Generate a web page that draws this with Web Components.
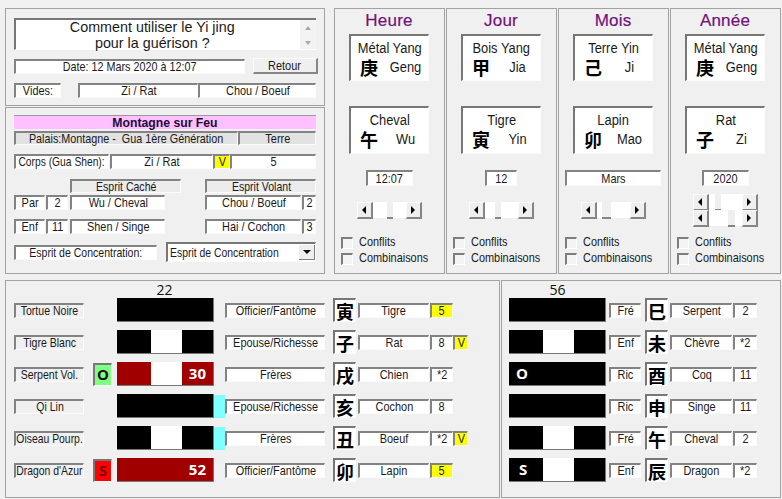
<!DOCTYPE html>
<html lang="fr"><head><meta charset="utf-8"><title>Yi jing</title>
<style>
html,body{margin:0;padding:0;background:#f0f0f0;overflow:hidden}
body{font:13px "Liberation Sans",Arial,sans-serif;color:#111}
</style></head><body>
<template id="t-app"><style>
:host{display:block;width:782px;height:499px;box-sizing:border-box;padding-top:8px}
.top{display:flex;height:266px}
.left{display:flex;flex-direction:column;gap:1px;width:320px;margin-left:5px;margin-right:9px}
.pillars{display:flex;gap:1px}
.bottom{display:flex;margin-top:6px;margin-left:5px;gap:1px}
</style>
<div class="top"><div class="left"><slot name="a"></slot></div><div class="pillars"><slot name="b"></slot></div></div>
<div class="bottom"><slot name="c"></slot></div></template>

<template id="t-panel"><style>
:host{display:flex;flex-direction:column;box-sizing:border-box;border:1px solid #a2a2a2;flex:none}
</style><slot></slot></template>

<template id="t-row"><style>
:host{display:flex;align-items:center}
</style><slot></slot></template>

<template id="t-field"><style>
:host{display:flex;align-items:center;justify-content:center;box-sizing:border-box;flex:none;height:15px;
border-style:solid;border-width:2px 1px 1px 2px;border-color:#838383 #fbfbfb #fbfbfb #838383;background:#fff;color:#1a1a1a;white-space:nowrap;font-size:13px;line-height:12px;overflow:visible}
span{display:block;flex:none;transform:scaleX(var(--sx,.84))}
</style><span><slot></slot></span></template>

<template id="t-button"><style>
:host{display:flex;align-items:center;justify-content:center;box-sizing:border-box;width:65px;height:16px;margin-left:8px;background:#efefef;border-style:solid;border-width:1px 2px 2px 1px;border-color:#fcfcfc #868686 #868686 #fcfcfc;font-size:13px;color:#1a1a1a;flex:none}
span{transform:scaleX(.84)}
</style><span><slot></slot></span></template>

<template id="t-memo"><style>
:host{display:flex;box-sizing:border-box;width:302px;height:32px;background:#fff;border-style:solid;border-width:2px 0 1px 2px;border-color:#777 #fff #fff #777}
.t{flex:1;text-align:center;font-size:15px;line-height:16px;color:#1a1a1a;padding-right:12px;margin-top:-1px;transform:scaleX(.955)}
.s{width:16px;background:#f3f3f3;display:flex;flex-direction:column;align-items:center;justify-content:space-between;padding:6px 0 4px;box-sizing:border-box}
i{width:0;height:0;border-left:3.5px solid transparent;border-right:3.5px solid transparent}
.u{border-bottom:4px solid #a8a8a8}.d{border-top:4px solid #a8a8a8}
</style><div class="t"><slot></slot></div><div class="s"><i class="u"></i><i class="d"></i></div></template>

<template id="t-combo"><style>
:host{display:flex;align-items:center;box-sizing:border-box;width:150px;height:20px;margin-left:9px;background:#fff;border-style:solid;border-width:2px 1px 1px 2px;border-color:#777 #fbfbfb #fbfbfb #777;font-size:13px;color:#1a1a1a;white-space:nowrap;flex:none}
.t{flex:1;padding-left:2px;min-width:0}
.t span{display:block;transform:scaleX(.8);transform-origin:0 50%}
.b{width:16px;height:15px;background:#efefef;border-right:1px solid #808080;border-bottom:1px solid #808080;display:flex;align-items:center;justify-content:center;box-sizing:border-box;flex:none}
i{width:0;height:0;border-left:4px solid transparent;border-right:4px solid transparent;border-top:4px solid #000}
</style><div class="t"><span><slot></slot></span></div><div class="b"><i></i></div></template>

<template id="t-pillar"><style>
:host{display:flex;flex-direction:column;align-items:center;box-sizing:border-box;width:111px;height:266px;border:1px solid #a2a2a2;padding-right:1px;flex:none}
h2{margin:0;height:25px;font:400 17px/24px "Liberation Sans",Arial,sans-serif;color:#72107a;-webkit-text-stroke:.2px #72107a;letter-spacing:.2px}
.box{box-sizing:border-box;width:80px;height:47px;background:#fff;border-style:solid;border-width:2px 1px 1px 2px;border-color:#777 #fbfbfb #fbfbfb #777;display:flex;flex-direction:column;align-items:center;padding-top:4px;font-size:14px;color:#1a1a1a}
.box+.box{margin-top:25px;height:48px}
.l{height:16px;line-height:16px;white-space:nowrap;transform:scaleX(.92)}
.v{display:flex;align-items:center;height:22px;width:100%;box-sizing:border-box;padding:0 4px 0 0}
.v b{font:700 18px/22px "Noto Sans CJK SC",sans-serif;color:#000;width:36px;text-align:center;flex:none}
.v span{flex:1;text-align:center;transform:scaleX(.92)}
.f{margin-top:16px;display:block}
.sc{height:33px;margin-top:8px;display:flex;flex-direction:column;justify-content:center}
.ck{align-self:flex-start;margin-left:6px;margin-top:10px;display:flex;flex-direction:column;gap:4px}
</style>
<h2></h2>
<div class="box"><div class="l" id="a"></div><div class="v"><b id="b"></b><span id="c"></span></div></div>
<div class="box"><div class="l" id="d"></div><div class="v"><b id="e"></b><span id="g"></span></div></div>
<div class="f"><slot name="f"></slot></div>
<div class="sc"><slot name="s"></slot></div>
<div class="ck"><yj-check>Conflits</yj-check><yj-check>Combinaisons</yj-check></div>
</template>

<template id="t-scroll"><style>
:host{display:flex;width:65px;height:17px;flex:none}
.b{width:16px;height:17px;box-sizing:border-box;background:#efefef;border-style:solid;border-width:1px 2px 2px 1px;border-color:#fbfbfb #858585 #858585 #fbfbfb;display:flex;align-items:center;justify-content:center;flex:none}
.w{background:#fff;height:16px}
.th{background:#efefef;border-bottom:2px solid #858585;box-sizing:border-box;height:17px;flex:none}
.t{display:flex;flex:1}
i{width:0;height:0;border-top:4px solid transparent;border-bottom:4px solid transparent}
.lf{border-right:4px solid #000}.rt{border-left:4px solid #000}
</style><div class="b"><i class="lf"></i></div><div class="t"><div class="w" id="w1"></div><div class="th" id="th"></div><div class="w" style="flex:1"></div></div><div class="b"><i class="rt"></i></div></template>

<template id="t-check"><style>
:host{display:flex;align-items:center;height:12px;font-size:13px;line-height:12px;color:#1a1a1a;white-space:nowrap}
i{width:12px;height:12px;box-sizing:border-box;background:#f4f4f4;border-style:solid;border-width:2px 1px 1px 2px;border-color:#7d7d7d #fff #fff #7d7d7d;margin-right:6px;flex:none}
span{transform:scaleX(.84);transform-origin:0 50%;margin-top:-2px}
</style><i></i><span><slot></slot></span></template>

<template id="t-bar"><style>
:host{display:flex;position:relative;box-sizing:border-box;width:97px;height:24px;flex:none;background:#000;border-right:1px solid #777;border-bottom:1px solid #777;
font:700 15px/23px "Open Sans",sans-serif;color:#fff;align-items:center;justify-content:var(--j,flex-end)}
.gap{position:absolute;left:34px;width:31px;top:0;bottom:0;background:#fff;display:var(--gap,none)}
.tx{padding:0 7px 0 var(--pl,7px);position:relative}
</style><div class="gap"></div><div class="tx"><slot></slot></div></template>

<template id="t-glyph"><style>
:host{display:flex;align-items:center;justify-content:center;box-sizing:border-box;width:23px;height:24px;flex:none;background:#fff;border-style:solid;border-width:2px 1px 1px 2px;border-color:#777 #fbfbfb #fbfbfb #777;font:700 18px/20px "Noto Sans CJK SC",sans-serif;color:#000;overflow:visible}
</style><slot></slot></template>

<template id="t-mark"><style>
:host{display:flex;align-items:center;justify-content:center;box-sizing:border-box;width:19px;height:23px;flex:none;margin-left:9px;margin-right:5px;border-style:solid;border-width:var(--bw,0);border-color:#777 #fbfbfb #fbfbfb #777;font:700 15px/15px "Open Sans",sans-serif;color:#111}
</style><slot></slot></template>

<template id="t-num"><style>
:host{display:block;text-align:center;height:17px;font:14px/17px "Open Sans",sans-serif;color:#111}
</style><slot></slot></template>

<template id="t-cyan"><style>
:host{display:block;width:11px;height:23px;background:#80ffff;flex:none}
</style></template>

<script>
const apply=(el)=>{
  const px={w:'width',h:'height',ml:'marginLeft',m:'marginTop'};
  for(const a in px) if(el.hasAttribute(a)) el.style[px[a]]=el.getAttribute(a)+'px';
  if(el.hasAttribute('p')) el.style.padding=el.getAttribute('p');
  if(el.hasAttribute('bg')) el.style.background=el.getAttribute('bg');
  if(el.hasAttribute('c')) el.style.color=el.getAttribute('c');
  if(el.hasAttribute('sx')) el.style.setProperty('--sx',el.getAttribute('sx'));
};
const def=(name,id,extra)=>{customElements.define(name,class extends HTMLElement{
  constructor(){super();this.attachShadow({mode:'open'}).appendChild(document.getElementById(id).content.cloneNode(true))}
  connectedCallback(){apply(this);if(extra)extra.call(this,this.shadowRoot)}
})};
def('yj-app','t-app');
def('yj-panel','t-panel');
def('yj-row','t-row');
def('yj-field','t-field');
def('yj-button','t-button');
def('yj-memo','t-memo');
def('yj-combo','t-combo');
def('yj-check','t-check');
def('yj-pillar','t-pillar',function(r){
  r.querySelector('h2').textContent=this.getAttribute('name');
  const v=this.getAttribute('data-v').split('|');
  ['a','b','c','d','e','g'].forEach((k,i)=>r.getElementById(k).textContent=v[i]);
});
def('yj-scroll','t-scroll',function(r){
  r.getElementById('w1').style.width=this.getAttribute('a')+'px';
  r.getElementById('th').style.width=this.getAttribute('t')+'px';
});
def('yj-bar','t-bar',function(){
  if(this.hasAttribute('open'))this.style.setProperty('--gap','block');
  if(this.hasAttribute('red'))this.style.background='#a00000';
  if(this.hasAttribute('start'))this.style.setProperty('--j','flex-start');
});
def('yj-glyph','t-glyph');
def('yj-mark','t-mark',function(){
  if(this.hasAttribute('bg'))this.style.setProperty('--bw','2px 1px 1px 2px');
});
def('yj-num','t-num');
def('yj-cyan','t-cyan');
</script>

<yj-app>
<yj-panel slot="a" h="98" p="9px 0 0 8px">
  <yj-memo>Comment utiliser le Yi jing<br>pour la guérison ?</yj-memo>
  <yj-row m="8" h="16"><yj-field w="231" sx=".83">Date: 12 Mars 2020 à 12:07</yj-field><yj-button>Retour</yj-button></yj-row>
  <yj-row m="9"><yj-field w="47">Vides:</yj-field><yj-field w="120" ml="17">Zi / Rat</yj-field><yj-field w="118">Chou / Boeuf</yj-field></yj-row>
</yj-panel>
<yj-panel slot="a" h="167" p="7px 0 0 8px">
  <yj-field w="302" h="14" bg="#ffc0ff" c="#1c0a3c" sx=".94" style="border:0;border-top:1px solid #999;font-weight:700">Montagne sur Feu</yj-field>
  <yj-row m="2"><yj-field w="224" h="14" bg="#e2e2e2" sx=".83">Palais:Montagne - &nbsp;Gua 1ère Génération</yj-field><yj-field w="78" h="14" bg="#e2e2e2">Terre</yj-field></yj-row>
  <yj-row m="9"><yj-field w="95" sx=".79">Corps (Gua Shen):</yj-field><yj-field w="103" ml="1">Zi / Rat</yj-field><yj-field w="17" bg="#ffff00">V</yj-field><yj-field w="86">5</yj-field></yj-row>
  <yj-row m="10"><yj-field w="111" h="14" ml="56" bg="#ececec" sx=".81">Esprit Caché</yj-field><yj-field w="111" h="14" ml="24" bg="#ececec" sx=".81">Esprit Volant</yj-field></yj-row>
  <yj-row m="2"><yj-field w="31">Par</yj-field><yj-field w="22" ml="1">2</yj-field><yj-field w="95" ml="2">Wu / Cheval</yj-field><yj-field w="96" ml="40">Chou / Boeuf</yj-field><yj-field w="14" ml="1">2</yj-field></yj-row>
  <yj-row m="9"><yj-field w="31">Enf</yj-field><yj-field w="22" ml="1">11</yj-field><yj-field w="95" ml="2">Shen / Singe</yj-field><yj-field w="96" ml="40">Hai / Cochon</yj-field><yj-field w="14" ml="1">3</yj-field></yj-row>
  <yj-row m="8" h="20"><yj-field w="143" sx=".81">Esprit de Concentration:</yj-field><yj-combo>Esprit de Concentration</yj-combo></yj-row>
</yj-panel>

<yj-pillar slot="b" name="Heure" data-v="Métal Yang|庚|Geng|Cheval|午|Wu"><yj-field slot="f" w="47" h="16">12:07</yj-field><yj-scroll slot="s" a="14" t="6"></yj-scroll></yj-pillar>
<yj-pillar slot="b" name="Jour" data-v="Bois Yang|甲|Jia|Tigre|寅|Yin"><yj-field slot="f" w="32" h="16">12</yj-field><yj-scroll slot="s" a="10" t="6"></yj-scroll></yj-pillar>
<yj-pillar slot="b" name="Mois" data-v="Terre Yin|己|Ji|Lapin|卯|Mao"><yj-field slot="f" w="96" h="16">Mars</yj-field><yj-scroll slot="s" a="5" t="9"></yj-scroll></yj-pillar>
<yj-pillar slot="b" name="Année" data-v="Métal Yang|庚|Geng|Rat|子|Zi"><yj-field slot="f" w="47" h="16">2020</yj-field><yj-scroll slot="s" a="6" t="6"></yj-scroll><yj-scroll slot="s" a="19" t="7" m="-1"></yj-scroll></yj-pillar>

<yj-panel slot="c" w="495" h="218" p="0 0 0 8px">
  <yj-num w="97" ml="102">22</yj-num>
  <yj-row h="24"><yj-field w="70" bg="#f0f0f0" sx=".81">Tortue Noire</yj-field><yj-mark></yj-mark><yj-bar></yj-bar><yj-field w="100" ml="11">Officier/Fantôme</yj-field><yj-glyph ml="8">寅</yj-glyph><yj-field w="71" ml="2">Tigre</yj-field><yj-field w="23" ml="1" bg="#ffff00">5</yj-field></yj-row>
  <yj-row h="24" m="8"><yj-field w="70" bg="#f0f0f0" sx=".81">Tigre Blanc</yj-field><yj-mark></yj-mark><yj-bar open></yj-bar><yj-field w="100" ml="11">Epouse/Richesse</yj-field><yj-glyph ml="8">子</yj-glyph><yj-field w="71" ml="2">Rat</yj-field><yj-field w="23" ml="1">8</yj-field><yj-field w="15" bg="#ffff00">V</yj-field></yj-row>
  <yj-row h="24" m="8"><yj-field w="70" bg="#f0f0f0" sx=".81">Serpent Vol.</yj-field><yj-mark bg="#80ff80">O</yj-mark><yj-bar open red>30</yj-bar><yj-field w="100" ml="11">Frères</yj-field><yj-glyph ml="8">戌</yj-glyph><yj-field w="71" ml="2">Chien</yj-field><yj-field w="23" ml="1">*2</yj-field></yj-row>
  <yj-row h="24" m="8"><yj-field w="70" bg="#f0f0f0" sx=".81">Qi Lin</yj-field><yj-mark></yj-mark><yj-bar></yj-bar><yj-cyan></yj-cyan><yj-field w="100">Epouse/Richesse</yj-field><yj-glyph ml="8">亥</yj-glyph><yj-field w="71" ml="2">Cochon</yj-field><yj-field w="23" ml="1">8</yj-field></yj-row>
  <yj-row h="24" m="8"><yj-field w="70" bg="#f0f0f0" sx=".8">Oiseau Pourp.</yj-field><yj-mark></yj-mark><yj-bar open></yj-bar><yj-cyan></yj-cyan><yj-field w="100">Frères</yj-field><yj-glyph ml="8">丑</yj-glyph><yj-field w="71" ml="2">Boeuf</yj-field><yj-field w="23" ml="1">*2</yj-field><yj-field w="15" bg="#ffff00">V</yj-field></yj-row>
  <yj-row h="24" m="8"><yj-field w="70" bg="#f0f0f0" sx=".8">Dragon d'Azur</yj-field><yj-mark bg="#ff0000" c="#7a0000">S</yj-mark><yj-bar red>52</yj-bar><yj-field w="100" ml="11">Officier/Fantôme</yj-field><yj-glyph ml="8">卯</yj-glyph><yj-field w="71" ml="2">Lapin</yj-field><yj-field w="23" ml="1" bg="#ffff00">5</yj-field></yj-row>
</yj-panel>
<yj-panel slot="c" w="280" h="218" p="0 0 0 7px">
  <yj-num w="97">56</yj-num>
  <yj-row h="24"><yj-bar></yj-bar><yj-field w="32" ml="3">Fré</yj-field><yj-glyph ml="4">巳</yj-glyph><yj-field w="62" ml="2">Serpent</yj-field><yj-field w="24" ml="1">2</yj-field></yj-row>
  <yj-row h="24" m="8"><yj-bar open></yj-bar><yj-field w="32" ml="3">Enf</yj-field><yj-glyph ml="4">未</yj-glyph><yj-field w="62" ml="2">Chèvre</yj-field><yj-field w="24" ml="1">*2</yj-field></yj-row>
  <yj-row h="24" m="8"><yj-bar start>O</yj-bar><yj-field w="32" ml="3">Ric</yj-field><yj-glyph ml="4">酉</yj-glyph><yj-field w="62" ml="2">Coq</yj-field><yj-field w="24" ml="1">11</yj-field></yj-row>
  <yj-row h="24" m="8"><yj-bar></yj-bar><yj-field w="32" ml="3">Ric</yj-field><yj-glyph ml="4">申</yj-glyph><yj-field w="62" ml="2">Singe</yj-field><yj-field w="24" ml="1">11</yj-field></yj-row>
  <yj-row h="24" m="8"><yj-bar open></yj-bar><yj-field w="32" ml="3">Fré</yj-field><yj-glyph ml="4">午</yj-glyph><yj-field w="62" ml="2">Cheval</yj-field><yj-field w="24" ml="1">2</yj-field></yj-row>
  <yj-row h="24" m="8"><yj-bar open start style="--pl:10px">S</yj-bar><yj-field w="32" ml="3">Enf</yj-field><yj-glyph ml="4">辰</yj-glyph><yj-field w="62" ml="2">Dragon</yj-field><yj-field w="24" ml="1">*2</yj-field></yj-row>
</yj-panel>
</yj-app>
</body></html>
